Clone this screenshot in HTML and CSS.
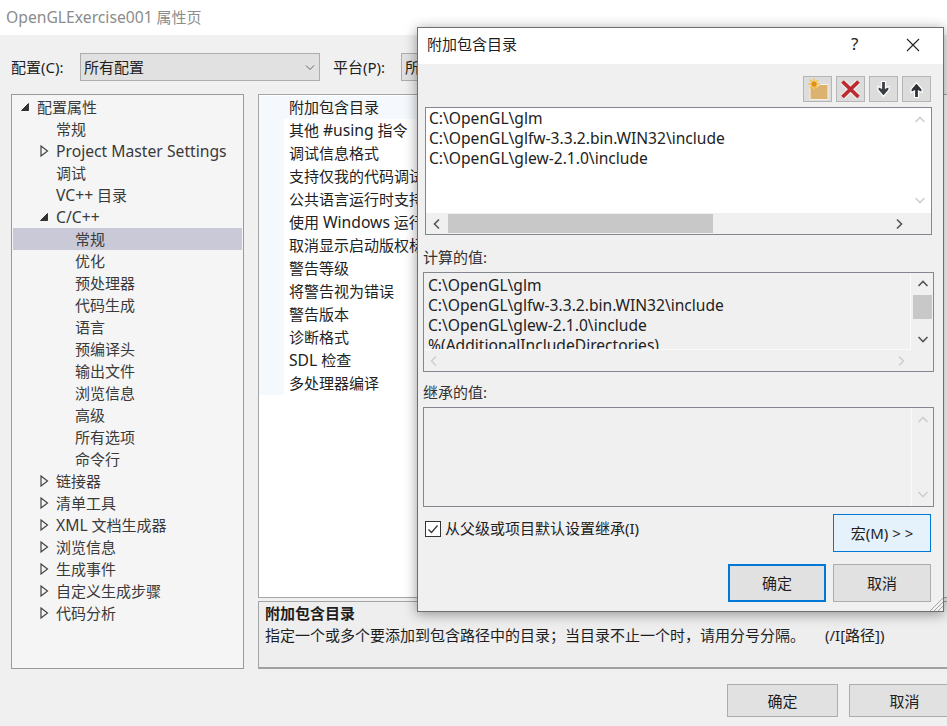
FILE: index.html
```html
<!DOCTYPE html>
<html lang="zh">
<head>
<meta charset="utf-8">
<title>OpenGLExercise001 属性页</title>
<link rel="stylesheet" href="styles.css">
</head>
<body>
<svg class="defs" width="0" height="0">
  <symbol id="open" viewBox="0 0 10 10"><path d="M8.5 1.5V8.5H1.5Z" fill="#333" stroke="#333"/></symbol>
  <symbol id="closed" viewBox="0 0 10 12"><path d="M2 1L8.5 6L2 11Z" fill="none" stroke="#444" stroke-width="1.2"/></symbol>
  <symbol id="up" viewBox="0 0 12 12"><path d="M1.5 8L6 3.5L10.500 8" fill="none" stroke="currentColor" stroke-width="1.6"/></symbol>
  <symbol id="down" viewBox="0 0 12 12"><path d="M1.5 4L6 8.500L10.500 4" fill="none" stroke="currentColor" stroke-width="1.6"/></symbol>
  <symbol id="left" viewBox="0 0 12 12"><path d="M8 1.500L3.500 6L8 10.500" fill="none" stroke="currentColor" stroke-width="1.6"/></symbol>
  <symbol id="right" viewBox="0 0 12 12"><path d="M4 1.500L8.500 6L4 10.500" fill="none" stroke="currentColor" stroke-width="1.6"/></symbol>
  <symbol id="thin-down" viewBox="0 0 12 12"><path d="M2 4.500L6 8.500L10 4.500" fill="none" stroke="currentColor" stroke-width="1"/></symbol>
</svg>

<div class="page">
  <header class="titlebar"><span class="lat">OpenGLExercise001</span> 属性页</header>

  <div class="config">
    <label class="config-label">配置(C):</label>
    <div class="select select-config">所有配置<svg class="select-arrow" width="12" height="12"><use href="#thin-down"/></svg></div>
    <label class="config-label config-label-2">平台(P):</label>
    <div class="select select-platform">所有平台</div>
  </div>

  <main class="panes">
    <nav class="tree">
      <div class="node l0"><svg class="tw tw-open"><use href="#open"/></svg>配置属性</div>
      <div class="node l1">常规</div>
      <div class="node l1"><svg class="tw tw-closed"><use href="#closed"/></svg><span class="lat">Project Master Settings</span></div>
      <div class="node l1">调试</div>
      <div class="node l1"><span class="lat">VC++</span> 目录</div>
      <div class="node l1"><svg class="tw tw-open"><use href="#open"/></svg><span class="lat">C/C++</span></div>
      <div class="node l2 selected">常规</div>
      <div class="node l2">优化</div>
      <div class="node l2">预处理器</div>
      <div class="node l2">代码生成</div>
      <div class="node l2">语言</div>
      <div class="node l2">预编译头</div>
      <div class="node l2">输出文件</div>
      <div class="node l2">浏览信息</div>
      <div class="node l2">高级</div>
      <div class="node l2">所有选项</div>
      <div class="node l2">命令行</div>
      <div class="node l1"><svg class="tw tw-closed"><use href="#closed"/></svg>链接器</div>
      <div class="node l1"><svg class="tw tw-closed"><use href="#closed"/></svg>清单工具</div>
      <div class="node l1"><svg class="tw tw-closed"><use href="#closed"/></svg><span class="lat">XML</span> 文档生成器</div>
      <div class="node l1"><svg class="tw tw-closed"><use href="#closed"/></svg>浏览信息</div>
      <div class="node l1"><svg class="tw tw-closed"><use href="#closed"/></svg>生成事件</div>
      <div class="node l1"><svg class="tw tw-closed"><use href="#closed"/></svg>自定义生成步骤</div>
      <div class="node l1"><svg class="tw tw-closed"><use href="#closed"/></svg>代码分析</div>
    </nav>

    <section class="right">
      <div class="props">
        <div class="prop prop-active"><span class="prop-name">附加包含目录</span></div>
        <div class="prop"><span class="prop-name">其他 <span class="lat">#using</span> 指令</span></div>
        <div class="prop"><span class="prop-name">调试信息格式</span></div>
        <div class="prop"><span class="prop-name">支持仅我的代码调试</span></div>
        <div class="prop"><span class="prop-name">公共语言运行时支持</span></div>
        <div class="prop"><span class="prop-name">使用 <span class="lat">Windows</span> 运行库</span></div>
        <div class="prop"><span class="prop-name">取消显示启动版权标志</span></div>
        <div class="prop"><span class="prop-name">警告等级</span></div>
        <div class="prop"><span class="prop-name">将警告视为错误</span></div>
        <div class="prop"><span class="prop-name">警告版本</span></div>
        <div class="prop"><span class="prop-name">诊断格式</span></div>
        <div class="prop"><span class="prop-name"><span class="lat">SDL</span> 检查</span></div>
        <div class="prop"><span class="prop-name">多处理器编译</span></div>
      </div>
      <div class="desc">
        <div class="desc-title">附加包含目录</div>
        <div class="desc-text"><span>指定一个或多个要添加到包含路径中的目录；当目录不止一个时，请用分号分隔。</span><span class="desc-flag">(/I[路径])</span></div>
      </div>
    </section>
  </main>

  <footer class="footer">
    <button class="btn btn-main">确定</button>
    <button class="btn btn-main">取消</button>
  </footer>
</div>

<div class="dialog">
  <div class="dlg-title">
    <span class="dlg-name">附加包含目录</span>
    <span class="dlg-help">?</span>
    <svg class="dlg-close" width="14" height="14" viewBox="0 0 14 14"><path d="M1 1L13 13M13 1L1 13" stroke="#222" stroke-width="1.100" fill="none"/></svg>
  </div>
  <div class="dlg-body">
    <div class="toolbar">
      <button class="tool">
        <svg width="27" height="24" viewBox="0 0 27 24">
          <path d="M6 9H14L15.500 7.500H24V22.500H6Z" fill="#dcb270" stroke="#f7f1e4" stroke-width="1"/>
          <path d="M10 1.500V12.500M4.500 7H15.500M6 3L14 11M14 3L6 11" stroke="#f6c65b" stroke-width="1.800"/>
          <circle cx="10" cy="7" r="2.600" fill="#e08f1c"/>
        </svg>
      </button>
      <button class="tool">
        <svg width="23" height="22" viewBox="0 0 23 22"><path d="M3.500 3.500L19.500 19M19.500 3.500L3.500 19" stroke="#eee" stroke-width="6" fill="none"/><path d="M3.500 3.500L19.500 19M19.500 3.500L3.500 19" stroke="#bd2a2e" stroke-width="3.800" fill="none"/></svg>
      </button>
      <button class="tool">
        <svg width="19" height="21" viewBox="0 0 19 21"><path d="M7.500 2.500H11.500V9L15 7.500V11L9.500 17.500L4 11V7.500L7.500 9Z" fill="#3a3f45" stroke="#fff" stroke-width="1.200"/></svg>
      </button>
      <button class="tool">
        <svg width="19" height="21" viewBox="0 0 19 21"><path d="M7.500 18.500H11.500V12L15 13.500V10L9.500 3.500L4 10V13.500L7.500 12Z" fill="#2f3338" stroke="#fff" stroke-width="1.200"/></svg>
      </button>
    </div>

    <div class="box box-edit">
      <div class="box-text">C:\OpenGL\glm<br>C:\OpenGL\glfw-3.3.2.bin.WIN32\include<br>C:\OpenGL\glew-2.1.0\include</div>
      <div class="vscroll vscroll-white pale">
        <svg width="12" height="12"><use href="#up"/></svg>
        <svg width="12" height="12"><use href="#down"/></svg>
      </div>
      <div class="hscroll">
        <svg class="dark" width="12" height="12"><use href="#left"/></svg>
        <div class="hthumb"></div>
        <svg class="dark" width="12" height="12"><use href="#right"/></svg>
      </div>
    </div>

    <div class="dlg-label">计算的值:</div>
    <div class="box box-read">
      <div class="read-area">
        <div class="box-text">C:\OpenGL\glm<br>C:\OpenGL\glfw-3.3.2.bin.WIN32\include<br>C:\OpenGL\glew-2.1.0\include<br>%(AdditionalIncludeDirectories)</div>
      </div>
      <div class="vscroll dark">
        <svg width="12" height="12"><use href="#up"/></svg>
        <div class="vthumb"></div>
        <svg width="12" height="12"><use href="#down"/></svg>
      </div>
      <div class="hscroll hscroll-pale pale">
        <svg width="12" height="12"><use href="#left"/></svg>
        <svg width="12" height="12"><use href="#right"/></svg>
      </div>
    </div>

    <div class="dlg-label dlg-label-2">继承的值:</div>
    <div class="box box-inherit">
      <div class="inherit-area"></div>
      <div class="vscroll pale">
        <svg width="12" height="12"><use href="#up"/></svg>
        <svg width="12" height="12"><use href="#down"/></svg>
      </div>
    </div>

    <div class="dlg-actions">
      <label class="check">
        <span class="checkbox"><svg width="14" height="14" viewBox="0 0 14 14"><path d="M2.500 7.500L5.500 10.500L11.500 3.500" fill="none" stroke="#333" stroke-width="1.200"/></svg></span>
        从父级或项目默认设置继承(I)
      </label>
      <button class="btn btn-macro">宏(M) &gt; &gt;</button>
    </div>
    <div class="dlg-buttons">
      <button class="btn btn-default">确定</button>
      <button class="btn">取消</button>
    </div>
    <svg class="grip" width="14" height="14" viewBox="0 0 14 14"><path d="M14 1L1 14M14 5L5 14M14 9L9 14" stroke="#a6a6a6" stroke-width="1" fill="none"/></svg>
  </div>
</div>
</body>
</html>
```

FILE: styles.css
```css
* { box-sizing: border-box; }
html, body { margin: 0; height: 100%; }
body {
  width: 947px;
  height: 726px;
  overflow: hidden;
  position: relative;
  background: #f0f0f0;
  color: #1e1e1e;
  font: 15px/22px "Noto Sans", "Noto Sans CJK SC", sans-serif;
}
.defs { position: absolute; }
svg { display: block; flex: none; }
.lat { font-size: 15.7px; }

.page { display: flex; flex-direction: column; height: 726px; }
.titlebar {
  height: 35px;
  padding: 6px 0 0 6px;
  background: #fff;
  color: #8c8c8c;
  line-height: 22px;
  font-size: 15px;
}

.config { display: flex; align-items: center; height: 28px; margin-top: 18px; padding-left: 11px; }
.config-label { width: 69px; }
.config-label-2 { width: 68px; margin-left: 13px; }
.select {
  height: 28px;
  display: flex;
  align-items: center;
  justify-content: space-between;
  padding: 0 3px 0 3px;
  background: #e1e1e1;
  border: 1px solid #adadad;
}
.select-config { width: 240px; }
.select-platform { width: 120px; }
.select-arrow { color: #666; }

.panes { display: flex; height: 575px; margin-top: 13px; padding-left: 11px; gap: 14px; }
.tree {
  width: 233px;
  background: #f5f5f5;
  border: 1px solid #9a9a9a;
  padding: 1px;
  color: #3a3a3a;
}
.node { height: 22px; line-height: 22px; position: relative; white-space: nowrap; }
.l0 { padding-left: 24px; }
.l1 { padding-left: 43px; }
.l2 { padding-left: 62px; }
.selected { background: #c9c9d8; }
.tw { position: absolute; }
.tw-open { width: 10px; height: 10px; top: 6px; margin-left: -17px; }
.tw-closed { width: 10px; height: 12px; top: 5px; margin-left: -17px; }

.right { flex: 1; min-width: 0; display: flex; flex-direction: column; gap: 3px; }
.props {
  height: 504px;
  background: #fff;
  border: 1px solid #a5a5a5;
  border-right: 0;
  padding-top: 1px;
}
.prop {
  height: 23px;
  padding-left: 25px;
  background: #f5f8fc;
  line-height: 23px;
  width: 159px;
}
.prop-name {
  display: block;
  height: 23px;
  padding-left: 5px;
  background: #fff;
  white-space: nowrap;
  overflow: hidden;
  color: #222;
}
.prop-active .prop-name { background: #f5f8fc; }
.desc {
  height: 68px;
  background: #eeeeee;
  border-top: 1px solid #a5a5a5;
  border-bottom: 2px solid #a0a0a0;
  border-left: 1px solid #a5a5a5;
  padding: 0 0 0 6px;
}
.desc-title { font-weight: 700; height: 22px; line-height: 23px; }
.desc-text { display: flex; line-height: 23px; white-space: nowrap; }
.desc-flag { position: absolute; left: 825px; }

.footer { display: flex; gap: 11px; padding: 15px 0 0 727px; }
.btn {
  font: inherit;
  color: #1e1e1e;
  background: #e1e1e1;
  border: 1px solid #adadad;
  padding: 0;
  width: 98px;
  height: 38px;
}
.btn-main { width: 111px; height: 33px; flex: none; }

.dialog {
  position: absolute;
  left: 417px;
  top: 27px;
  width: 527px;
  height: 585px;
  display: flex;
  flex-direction: column;
  border: 1px solid #6f6f6f;
  background: #f0f0f0;
  box-shadow: 0 2px 12px rgba(0, 0, 0, .4);
}
.dlg-title {
  height: 36px;
  flex: none;
  background: #fff;
  display: flex;
  align-items: flex-start;
  padding: 5px 0 0 9px;
  position: relative;
}
.dlg-name { flex: 1; }
.dlg-help { position: absolute; left: 433px; top: 5px; font-size: 17px; }
.dlg-close { position: absolute; left: 488px; top: 10px; }

.dlg-body { flex: 1; position: relative; padding: 12px 9px 0 5px; }
.toolbar { display: flex; justify-content: flex-end; gap: 4px; height: 26px; padding-right: 3px; }
.tool {
  width: 29px;
  height: 26px;
  padding: 0;
  display: flex;
  align-items: center;
  justify-content: center;
  background: #dcdcdc;
  border: 1px solid #b5b5b5;
}

.box {
  position: relative;
  border: 1px solid #828790;
  line-height: 20px;
  color: #222;
}
.box-edit {
  height: 128px;
  width: 507px;
  margin: 5px 0 0 2px;
  background: #fff;
  padding: 0 0 0 3px;
}
.box-text { white-space: nowrap; font-size: 15.6px; }
.vscroll {
  position: absolute;
  top: 0;
  right: 0;
  bottom: 0;
  width: 21px;
  display: flex;
  flex-direction: column;
  align-items: center;
  justify-content: space-between;
  padding: 6px 0;
  background: #f0f0f0;
}
.vscroll-white { background: #fff; bottom: 20px; padding: 6px 2px 8px 0; }
.hscroll {
  position: absolute;
  left: 0;
  right: 0;
  bottom: 0;
  height: 21px;
  display: flex;
  align-items: center;
  justify-content: space-between;
  padding: 0 26px 0 5px;
  background: #f0f0f0;
}
.hthumb {
  position: absolute;
  left: 22px;
  top: 1px;
  width: 265px;
  height: 19px;
  background: #c8c8c8;
}
.dark { color: #555; }
.pale { color: #cfcfcf; }

.dlg-label { height: 37px; padding-top: 11px; line-height: 22px; color: #333; }
.dlg-label-2 { height: 35px; padding-top: 9px; }
.box-read, .box-inherit { height: 100px; background: #f0f0f0; }
.read-area {
  position: absolute;
  left: 0;
  top: 1px;
  right: 22px;
  height: 76px;
  overflow: hidden;
  padding: 1px 0 0 4px;
  border-right: 1px solid #fafafa;
  border-bottom: 1px solid #fafafa;
}
.box-read .vscroll { bottom: 21px; padding: 5px 0; }
.vthumb { width: 19px; height: 25px; background: #c8c8c8; margin-bottom: 14px; margin-top: 5px; }
.hscroll-pale { padding: 0 26px 0 4px; }
.inherit-area {
  position: absolute;
  left: 0;
  top: 0;
  right: 21px;
  bottom: 0;
  border-right: 1px solid #fafafa;
}

.dlg-actions { display: flex; justify-content: space-between; align-items: flex-start; margin-top: 7px; padding-right: 3px; }
.check { display: flex; gap: 4px; padding: 3px 0 0 2px; line-height: 22px; color: #222; align-items: flex-start; }
.checkbox {
  width: 16px;
  height: 16px;
  margin-top: 4px;
  background: #fff;
  border: 1px solid #333;
  display: flex;
  align-items: center;
  justify-content: center;
}
.btn-macro { background: #e5f1fb; border-color: #0078d7; }
.dlg-buttons { display: flex; justify-content: flex-end; gap: 7px; margin-top: 12px; padding-right: 3px; }
.btn-default { border: 2px solid #0078d7; }
.grip { position: absolute; right: 0; bottom: 0; }
```
